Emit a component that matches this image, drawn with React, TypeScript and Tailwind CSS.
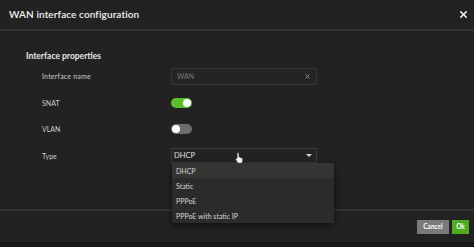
import React from 'react';
import { X } from 'lucide-react';

const font = { fontFamily: 'Lato, "Noto Sans", sans-serif' };

const Toggle = ({ on }: { on: boolean }) => (
  <div className={`w-[21px] h-[10px] rounded-full flex items-center px-[1px] ${on ? 'bg-[#5cbf2a] justify-end' : 'bg-[#6e6e6e] justify-start'}`}>
    <div className="w-[8px] h-[8px] rounded-full bg-white" />
  </div>
);

const App = () => {
  const options = ['DHCP', 'Static', 'PPPoE', 'PPPoE with static IP'];

  return (
    <div className="w-[474px] h-[247px] bg-[#222222] flex flex-col overflow-hidden" style={font}>
      {/* Header */}
      <div className="h-[29px] flex items-center justify-between pl-[9px] pr-[5px] border-b-2 border-[#333333] box-content">
        <h1 className="text-[10px] font-semibold text-[#f2f2f2] tracking-[0.1px]">WAN interface configuration</h1>
        <X className="w-[11px] h-[11px] text-white" strokeWidth={3} />
      </div>

      {/* Body */}
      <div className="flex-1 relative pt-[20px]">
        <h2 className="pl-[26px] text-[8.5px] font-bold text-[#e6e6e6] h-[10px] leading-[10px]">Interface properties</h2>

        <div className="mt-[2px] grid grid-cols-[171px_146px] auto-rows-[26.5px] items-center text-[7px] text-[#cccccc]">
          <span className="pl-[42px] tracking-[0.2px]">Interface name</span>
          <div className="h-[17px] border border-[#343434] bg-[#242424] flex items-center justify-between px-[5px]">
            <span className="text-[#7a7a7a]">WAN</span>
            <X className="w-[7px] h-[7px] text-[#9a9a9a]" strokeWidth={3} />
          </div>

          <span className="pl-[42px]">SNAT</span>
          <Toggle on />

          <span className="pl-[42px]">VLAN</span>
          <Toggle on={false} />

          <span className="pl-[42px]">Type</span>
          <div className="relative h-[15px] border border-[#3a3a3a] bg-[#232323] flex items-center justify-between pl-[2px] pr-[4px]">
            <span className="text-[#e0e0e0] text-[7.5px]">DHCP</span>
            <span className="w-0 h-0 border-l-[3px] border-r-[3px] border-t-[3px] border-l-transparent border-r-transparent border-t-[#d0d0d0]" />
            {/* hand cursor */}
            <svg className="absolute left-[63px] top-[3px]" width="9" height="12" viewBox="0 0 9 12">
              <path d="M3 0.8c.6 0 1 .4 1 1V5l.3-.1c.5 0 .9.2 1 .6.5-.2 1 0 1.2.4.5-.2 1.1.1 1.2.6V9c0 1.6-1.3 2.6-2.8 2.6H4.4c-1 0-1.7-.5-2.2-1.3L.6 7.6c-.3-.5-.1-1 .3-1.2.4-.2.9 0 1.2.4V1.8c0-.6.4-1 .9-1z" fill="#ffffff" stroke="#222" strokeWidth="0.6" />
            </svg>
            {/* dropdown menu */}
            <div className="absolute left-0 top-[14px] w-[162px] bg-[#2b2b2b] shadow-[0_2px_6px_rgba(0,0,0,0.6)] z-10">
              {options.map((o, i) => (
                <div key={o} className={`h-[15px] flex items-center pl-[4px] text-[7px] text-[#d6d6d6] ${i === 0 ? 'bg-[#343434]' : ''}`}>
                  {o}
                </div>
              ))}
            </div>
          </div>
        </div>
      </div>

      {/* Footer */}
      <div className="h-[31px] border-t-2 border-[#333333] box-content flex items-center justify-end gap-[3px] pr-[5px]">
        <button className="w-[32px] h-[14px] bg-[#7a7a7a] text-white text-[6.5px] font-bold flex items-center justify-center">Cancel</button>
        <button className="w-[17px] h-[14px] bg-[#4fae1f] text-white text-[6.5px] font-bold flex items-center justify-center">Ok</button>
      </div>
      <div className="h-[5px] bg-[#161616]" />
    </div>
  );
};

export default App;
